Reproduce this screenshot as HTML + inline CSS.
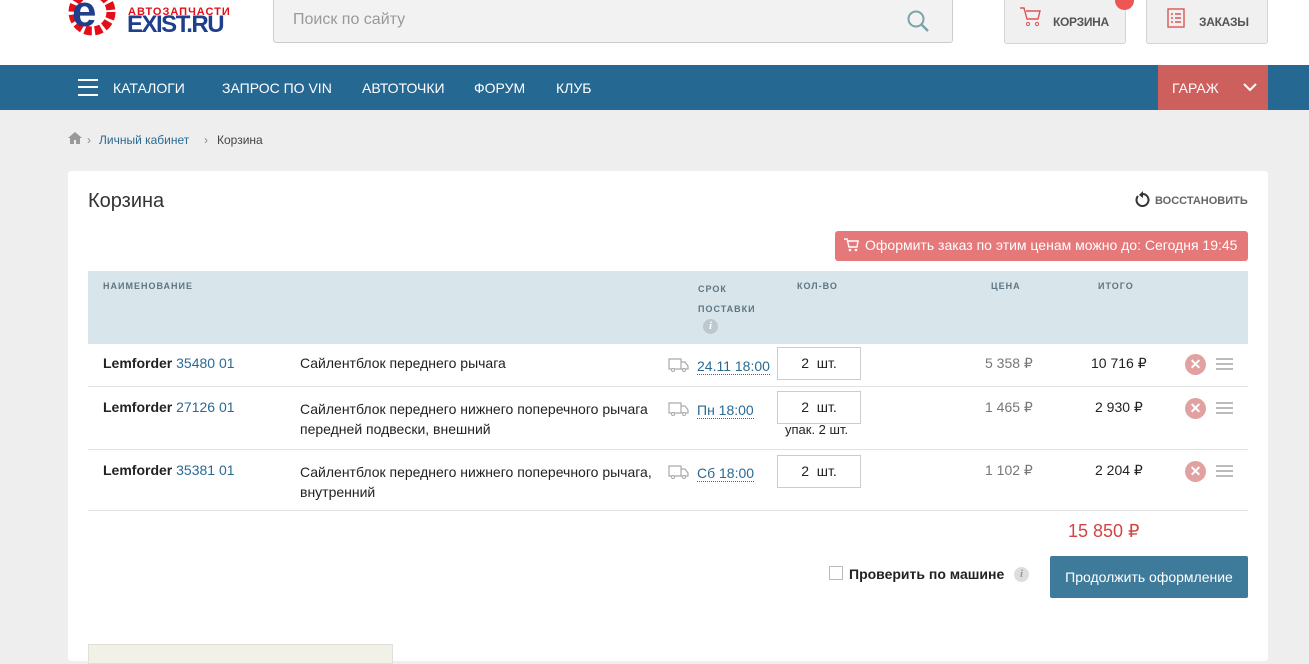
<!DOCTYPE html>
<html><head><meta charset="utf-8"><style>
*{margin:0;padding:0;box-sizing:border-box}
body{width:1309px;height:657px;overflow:hidden;background:#eeeeee;font-family:"Liberation Sans",sans-serif;position:relative;color:#222}
.a{position:absolute}
.hdr{left:0;top:0;width:1309px;height:65px;background:#fff}
.nav{left:0;top:65px;width:1309px;height:45px;background:#256892}
.nav span{position:absolute;top:15px;color:#fff;font-size:14px}
.btn{background:#f0f0f0;border:1px solid #d4d4d4;border-top:none;border-radius:0 0 3px 3px;height:44px;top:0}
.btn b{position:absolute;top:15px;font-size:12px;color:#555;font-weight:bold}
.card{left:68px;top:171px;width:1200px;height:490px;background:#fff;border-radius:3px}
.th{font-size:9px;font-weight:bold;color:#5f7582;letter-spacing:1px}
.row{font-size:14px}
.qty{width:84px;height:33px;border:1px solid #ccc;background:#fff;font-size:14px;text-align:center;line-height:31px}
.lnk{color:#2a6a93;border-bottom:1px dotted #2a6a93}
.x{width:21px;height:21px;border-radius:50%;background:#e2a1a1;color:#fff;font-weight:bold;text-align:center;line-height:21px;font-size:14px}
.ham{width:17px;height:12px;border-top:2px solid #bbb;border-bottom:2px solid #bbb}
.ham:after{content:"";position:absolute;left:0;top:3px;width:17px;height:2px;background:#bbb}
.sep{left:88px;width:1160px;height:1px;background:#e2e2e2}
</style></head><body>
<div class="a hdr"></div>
<svg class="a" style="left:66px;top:-10px" width="60" height="54" viewBox="0 0 60 54"><circle cx="26" cy="22" r="19" fill="none" stroke="#e30e17" stroke-width="9" stroke-dasharray="7 3"/><circle cx="26" cy="22" r="13" fill="#fff"/><text x="6" y="36" font-size="44" font-weight="bold" fill="#1f3f8c" font-family="Liberation Sans">e</text></svg>
<div class="a" style="left:128px;top:6px;font-size:11px;font-weight:bold;color:#e30e17;letter-spacing:1px">АВТОЗАПЧАСТИ</div>
<div class="a" style="left:127px;top:11px;font-size:24px;font-weight:bold;color:#1f3f8c;letter-spacing:-1.5px">EXIST.RU</div>
<div class="a" style="left:273px;top:-2px;width:680px;height:45px;background:#f2f2f2;border:1px solid #ccc;border-radius:3px"></div>
<div class="a" style="left:293px;top:11px;font-size:16px;color:#999">Поиск по сайту</div>
<svg class="a" style="left:906px;top:9px" width="24" height="24"><circle cx="10" cy="10" r="7.5" fill="none" stroke="#7aa3ac" stroke-width="2"/><line x1="15.5" y1="15.5" x2="22" y2="22" stroke="#7aa3ac" stroke-width="2.5"/></svg>
<div class="a btn" style="left:1004px;width:122px"><svg class="a" style="left:14px;top:6px" width="24" height="22" viewBox="0 0 24 22"><path d="M1 2h4l3 11h11l2-8H7" fill="none" stroke="#d55" stroke-width="1.4"/><circle cx="9" cy="18" r="1.6" fill="none" stroke="#d55"/><circle cx="18" cy="18" r="1.6" fill="none" stroke="#d55"/></svg><b style="left:48px;letter-spacing:-0.3px">КОРЗИНА</b></div>
<div class="a" style="left:1115px;top:-9px;width:19px;height:19px;border-radius:50%;background:#e55"></div>
<div class="a btn" style="left:1146px;width:122px"><svg class="a" style="left:20px;top:8px" width="18" height="20"><rect x="1" y="1" width="16" height="18" fill="none" stroke="#d55" stroke-width="1.4"/><path d="M4 6h2M8 6h6M4 10h2M8 10h6M4 14h2M8 14h6" stroke="#d55" stroke-width="1.4"/></svg><b style="left:52px;letter-spacing:-0.3px">ЗАКАЗЫ</b></div>
<div class="a nav">
<div class="a" style="left:78px;top:14px;width:20px;height:17px;border-top:2px solid #fff;border-bottom:2px solid #fff"><div class="a" style="left:0;top:5px;width:20px;height:2px;background:#fff"></div></div>
<span style="left:113px">КАТАЛОГИ</span><span style="left:222px">ЗАПРОС ПО VIN</span><span style="left:362px">АВТОТОЧКИ</span><span style="left:474px">ФОРУМ</span><span style="left:556px">КЛУБ</span>
<div class="a" style="left:1158px;top:0;width:110px;height:45px;background:#cd5f5c"></div>
<span style="left:1172px">ГАРАЖ</span>
<svg class="a" style="left:1242px;top:17px" width="16" height="10"><path d="M2 2l6 6 6-6" fill="none" stroke="#fff" stroke-width="2"/></svg>
</div>
<svg class="a" style="left:67px;top:131px" width="16" height="14"><path d="M8 1L1 7h2v6h4V9h2v4h4V7h2z" fill="#999"/></svg>
<div class="a" style="left:87px;top:133px;font-size:12px;color:#888">›</div>
<div class="a" style="left:99px;top:133px;font-size:12px;color:#2a6a93">Личный кабинет</div>
<div class="a" style="left:204px;top:133px;font-size:12px;color:#888">›</div>
<div class="a" style="left:217px;top:133px;font-size:12px;color:#444">Корзина</div>
<div class="a card"></div>
<div class="a" style="left:88px;top:190px;font-size:20px;color:#333">Корзина</div>
<svg class="a" style="left:1134px;top:191px" width="16" height="17"><path d="M4 5a6 6 0 1 0 5-2" fill="none" stroke="#333" stroke-width="2"/><path d="M9 0v7l-4-3z" fill="#333"/></svg>
<div class="a" style="left:1155px;top:195px;font-size:11px;font-weight:bold;color:#666">ВОССТАНОВИТЬ</div>
<div class="a" style="left:835px;top:231px;width:413px;height:30px;background:#e57879;border-radius:3px;color:#fff;font-size:14px;line-height:29px;padding-left:30px">Оформить заказ по этим ценам можно до: Сегодня 19:45</div>
<svg class="a" style="left:843px;top:238px" width="16" height="15"><path d="M1 1h3l2 8h8l1-6H5" fill="none" stroke="#fff" stroke-width="1.4"/><circle cx="7" cy="12" r="1.3" fill="#fff"/><circle cx="13" cy="12" r="1.3" fill="#fff"/></svg>
<div class="a" style="left:88px;top:271px;width:1160px;height:73px;background:#d8e5ea"></div>
<div class="a th" style="left:103px;top:281px">НАИМЕНОВАНИЕ</div>
<div class="a th" style="left:698px;top:279px;line-height:20px">СРОК<br>ПОСТАВКИ</div>
<div class="a" style="left:703px;top:319px;width:15px;height:15px;border-radius:50%;background:#bcc8ce;color:#fff;font:italic bold 11px 'Liberation Serif';text-align:center;line-height:15px">i</div>
<div class="a th" style="left:797px;top:281px">КОЛ-ВО</div>
<div class="a th" style="left:991px;top:281px">ЦЕНА</div>
<div class="a th" style="left:1098px;top:281px">ИТОГО</div>

<div class="a row" style="left:103px;top:355px"><b>Lemforder</b> <span style="color:#2a6a93">35480 01</span></div>
<div class="a row" style="left:300px;top:355px">Сайлентблок переднего рычага</div>
<div class="a row" style="left:697px;top:358px"><span class="lnk">24.11 18:00</span></div>
<div class="a qty" style="left:777px;top:347px">2 &nbsp;шт.</div>
<div class="a row" style="left:985px;top:355px;color:#777">5 358 ₽</div>
<div class="a row" style="left:1091px;top:355px">10 716 ₽</div>
<div class="a sep" style="top:386px"></div>

<div class="a row" style="left:103px;top:399px"><b>Lemforder</b> <span style="color:#2a6a93">27126 01</span></div>
<div class="a row" style="left:300px;top:399px;line-height:20px">Сайлентблок переднего нижнего поперечного рычага<br>передней подвески, внешний</div>
<div class="a row" style="left:697px;top:402px"><span class="lnk">Пн 18:00</span></div>
<div class="a qty" style="left:777px;top:391px">2 &nbsp;шт.</div>
<div class="a" style="left:785px;top:422px;font-size:13px">упак. 2 шт.</div>
<div class="a row" style="left:985px;top:399px;color:#777">1 465 ₽</div>
<div class="a row" style="left:1095px;top:399px">2 930 ₽</div>
<div class="a sep" style="top:449px"></div>

<div class="a row" style="left:103px;top:462px"><b>Lemforder</b> <span style="color:#2a6a93">35381 01</span></div>
<div class="a row" style="left:300px;top:462px;line-height:20px">Сайлентблок переднего нижнего поперечного рычага,<br>внутренний</div>
<div class="a row" style="left:697px;top:465px"><span class="lnk">Сб 18:00</span></div>
<div class="a qty" style="left:777px;top:455px">2 &nbsp;шт.</div>
<div class="a row" style="left:985px;top:462px;color:#777">1 102 ₽</div>
<div class="a row" style="left:1095px;top:462px">2 204 ₽</div>
<div class="a sep" style="top:510px"></div>

<svg class="a" style="left:668px;top:357px" width="22" height="16"><path d="M1 2h12v10H1zM13 5h4l3 4v3h-7" fill="none" stroke="#aaa" stroke-width="1.2"/><circle cx="5" cy="13" r="1.5" fill="#fff" stroke="#aaa"/><circle cx="16" cy="13" r="1.5" fill="#fff" stroke="#aaa"/></svg>
<svg class="a" style="left:668px;top:401px" width="22" height="16"><path d="M1 2h12v10H1zM13 5h4l3 4v3h-7" fill="none" stroke="#aaa" stroke-width="1.2"/><circle cx="5" cy="13" r="1.5" fill="#fff" stroke="#aaa"/><circle cx="16" cy="13" r="1.5" fill="#fff" stroke="#aaa"/></svg>
<svg class="a" style="left:668px;top:464px" width="22" height="16"><path d="M1 2h12v10H1zM13 5h4l3 4v3h-7" fill="none" stroke="#aaa" stroke-width="1.2"/><circle cx="5" cy="13" r="1.5" fill="#fff" stroke="#aaa"/><circle cx="16" cy="13" r="1.5" fill="#fff" stroke="#aaa"/></svg>
<div class="a x" style="left:1185px;top:354px">✕</div><div class="a ham" style="left:1216px;top:358px"></div>
<div class="a x" style="left:1185px;top:398px">✕</div><div class="a ham" style="left:1216px;top:402px"></div>
<div class="a x" style="left:1185px;top:461px">✕</div><div class="a ham" style="left:1216px;top:465px"></div>

<div class="a" style="left:1068px;top:521px;font-size:18px;color:#d04545">15 850 ₽</div>
<div class="a" style="left:829px;top:566px;width:14px;height:14px;border:1px solid #bbb;background:#fff"></div>
<div class="a" style="left:849px;top:566px;font-size:14px;font-weight:bold">Проверить по машине</div>
<div class="a" style="left:1014px;top:567px;width:15px;height:15px;border-radius:50%;background:#ddd;color:#999;font:italic bold 11px 'Liberation Serif';text-align:center;line-height:15px">i</div>
<div class="a" style="left:1050px;top:556px;width:198px;height:42px;background:#3e7b9a;border-radius:2px;color:#fff;font-size:14px;text-align:center;line-height:42px">Продолжить оформление</div>
<div class="a" style="left:88px;top:644px;width:305px;height:20px;background:#f1f1e8;border:1px solid #e0e0d6"></div>
</body></html>
